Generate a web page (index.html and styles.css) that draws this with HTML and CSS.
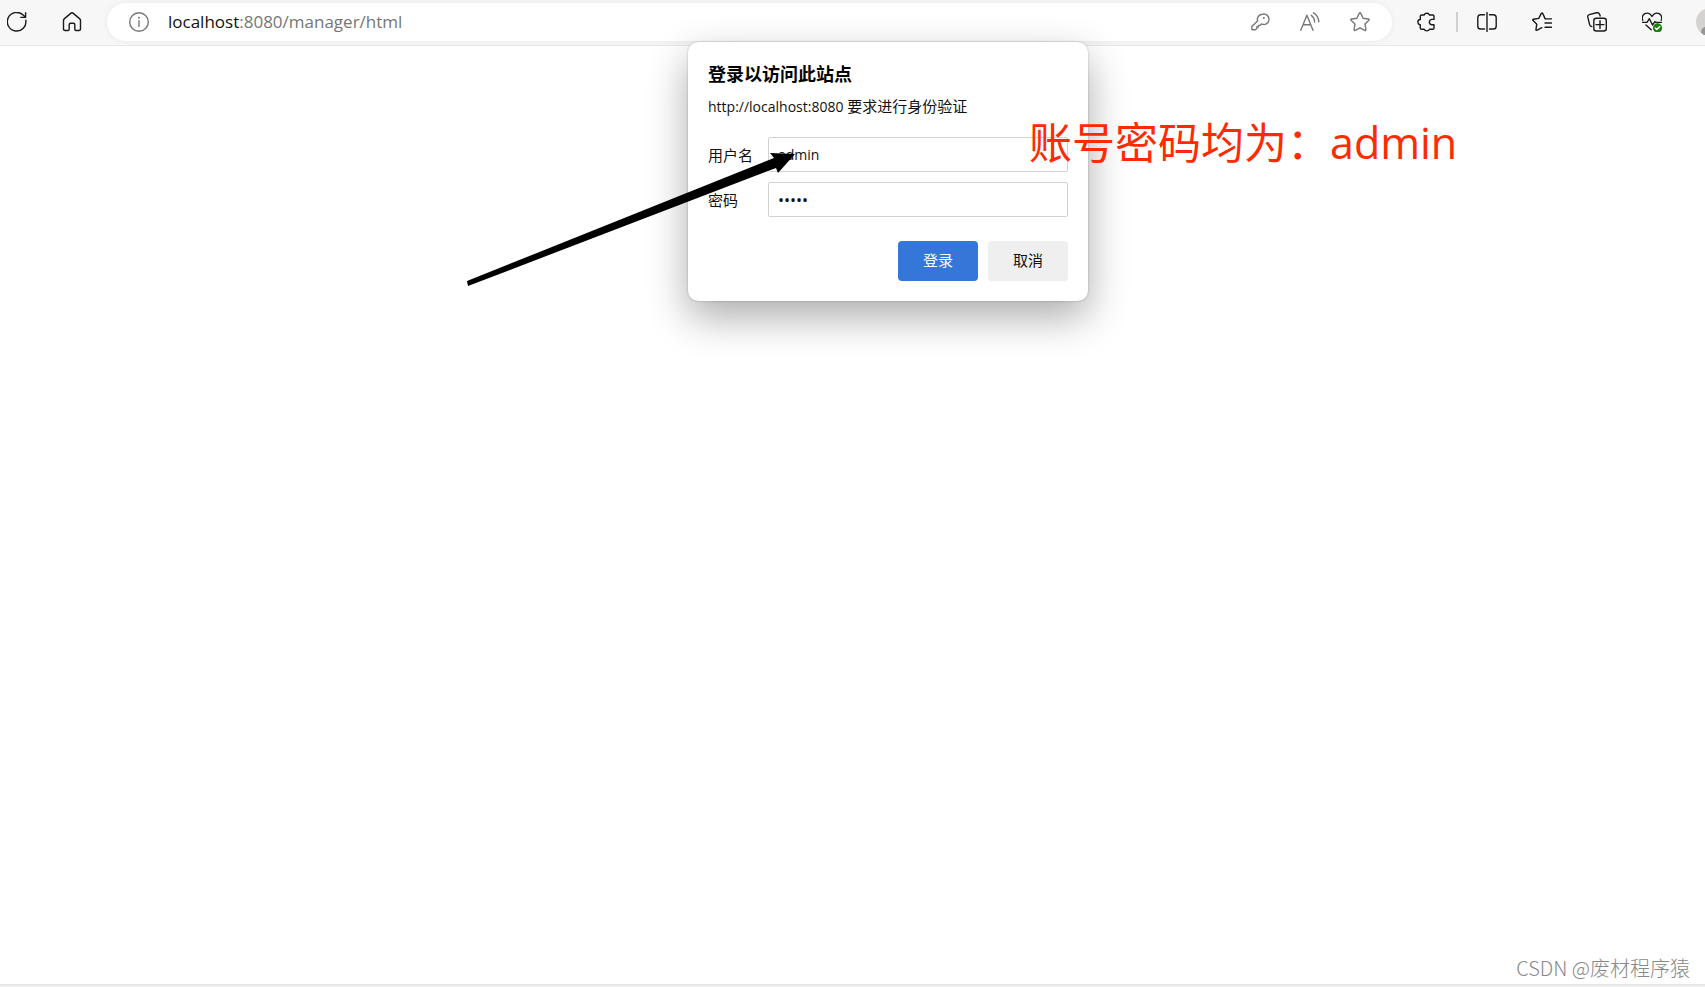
FILE: index.html
```html
<!DOCTYPE html>
<html lang="zh-CN">

<head>
    <meta charset="UTF-8">
    <meta name="viewport" content="width=device-width, initial-scale=1.0">
    <title>localhost:8080/manager/html</title>
    <link rel="stylesheet" href="styles.css">
</head>

<body>
    <header class="toolbar">
        <nav class="nav-left">
            <button class="icon-btn" aria-label="刷新">
                <svg viewBox="0 0 20 20"><path d="M18.8 8.2A9.3 9.3 0 1 1 15.8 2.8L18.6 5.2M18.6 .8V5.4H13.8"/></svg>
            </button>
            <button class="icon-btn" aria-label="主页">
                <svg viewBox="0 0 20 20"><path d="M1.5 8.4Q1.5 7.5 2.2 6.9L9 1.1Q10 .3 11 1.1L17.8 6.9Q18.5 7.5 18.5 8.4V17Q18.5 18.5 17 18.5H14Q12.8 18.5 12.8 17.3V12.5Q12.8 11.2 11.5 11.2H8.5Q7.2 11.2 7.2 12.5V17.3Q7.2 18.5 6 18.5H3Q1.5 18.5 1.5 17Z"/></svg>
            </button>
        </nav>

        <div class="address">
            <button class="icon-btn gray" aria-label="站点信息">
                <svg viewBox="0 0 20 20"><circle cx="10" cy="10" r="9.3"/><path d="M10 8.8V14.6"/><circle class="fill" cx="10" cy="5.8" r="1"/></svg>
            </button>
            <a class="url" href="http://localhost:8080/manager/html"><span>localhost</span>:8080/manager/html</a>
            <div class="address-icons">
                <button class="icon-btn gray" aria-label="密码">
                    <svg viewBox="0 0 20 20"><path d="M12.6 2.2A5.2 5.2 0 1 1 11.5 11.9L9.9 13.4H8.4V15H6.8V16.5L5.5 17.8H2.6Q1.8 17.8 1.8 17V14.6L7.6 8.9A5.2 5.2 0 0 1 12.6 2.2Z"/><circle class="fill" cx="13.8" cy="6" r="1"/></svg>
                </button>
                <button class="icon-btn gray" aria-label="大声朗读">
                    <svg viewBox="0 0 20 20"><path d="M.8 18.3L6.9 3.2L13 18.3M3.1 12.8H10.8M11.2 3.3Q14.5 5.5 14.6 10M13.4 .8Q18.6 3.8 18.8 9.8"/></svg>
                </button>
                <button class="icon-btn gray" aria-label="收藏此页">
                    <svg viewBox="0 0 20 20"><path d="M9.2 1.4Q10 0 10.8 1.4L13.1 6.2L18.4 7Q19.8 7.3 18.8 8.4L15 12.1L15.9 17.4Q16 18.9 14.7 18.3L10 15.8L5.3 18.3Q4 18.9 4.1 17.4L5 12.1L1.2 8.4Q.2 7.3 1.6 7L6.9 6.2Z"/></svg>
                </button>
            </div>
        </div>

        <nav class="nav-right">
            <button class="icon-btn" aria-label="扩展">
                <svg viewBox="0 0 20 20"><path d="M3.3 4.2Q3.3 3 4.5 3H7.2A2.7 2.3 0 0 1 12.4 3H15.8Q17 3 17 4.2V7.4H15A2.6 2.6 0 0 0 15 12.7H17V16Q17 17.2 15.8 17.2H12.4A2.7 2.3 0 0 1 7.2 17.2H4.5Q3.3 17.2 3.3 16V12.7A2.4 2.6 0 0 1 3.3 7.5Z"/></svg>
            </button>
            <span class="divider"></span>
            <button class="icon-btn" aria-label="分屏">
                <svg viewBox="0 0 20 20"><path d="M7.5 2.7H3.7Q.8 2.7 .8 5.6V14.2Q.8 17 3.7 17H7.5M12.5 2.7H16.3Q19.2 2.7 19.2 5.6V14.2Q19.2 17 16.3 17H12.5M10 .5V19.5"/></svg>
            </button>
            <button class="icon-btn" aria-label="收藏夹">
                <svg viewBox="0 0 20 20"><path d="M13.2 6.9L10.8 1.6Q10 .2 9.2 1.6L6.7 6.4L1.6 7.2Q.1 7.5 1.1 8.6L4.8 12.2L4 17.3Q3.8 18.9 5.2 18.2L9.8 15.7M13.2 6.9H19.6M13 11H19.6M13 15.2H19.6"/></svg>
            </button>
            <button class="icon-btn" aria-label="集锦">
                <svg viewBox="0 0 20 20"><path d="M4.8 14.5Q3.1 14.3 2.6 12.6L.8 5.2Q.4 3.2 2.2 2.6L9.5 .8Q11.8 .3 12.6 2.2L13.2 4M9.4 6.2H16.8Q19.3 6.2 19.3 8.7V16.5Q19.3 19 16.8 19H9.4Q6.8 19 6.8 16.5V8.7Q6.8 6.2 9.4 6.2ZM13 8.6V16.6M9 12.6H17"/></svg>
            </button>
            <button class="icon-btn" aria-label="浏览器概要">
                <svg viewBox="0 0 20 20"><path d="M.8 8.2A4.8 4.8 0 0 1 9.4 3.7L10 4.4L10.6 3.7A4.8 4.8 0 0 1 19.2 8.2M.3 10.4H5L7.4 6.7L10.5 13L12.9 9.7L14 10.4H19.7M4 13L9.2 17.8"/><circle class="badge" cx="15.5" cy="15.9" r="4.6"/><path class="tick" d="M13.2 16L14.8 17.6L17.8 14.4"/></svg>
            </button>
            <button class="avatar" aria-label="个人资料">
                <svg viewBox="0 0 28 28"><circle cx="14" cy="14" r="14" fill="#d5d3d1"/><circle cx="14" cy="11" r="5" fill="#989694"/><path d="M5 24.7Q5 18 14 18Q23 18 23 24.7A14 14 0 0 1 5 24.7Z" fill="#989694"/></svg>
            </button>
        </nav>
    </header>

    <main class="page">
        <form class="dialog">
            <h1>登录以访问此站点</h1>
            <p><span class="host">http://localhost:8080</span> 要求进行身份验证</p>
            <div class="row">
                <label for="user">用户名</label>
                <input type="text" id="user" value="admin">
            </div>
            <div class="row">
                <label for="pass">密码</label>
                <input type="password" id="pass" value="admin">
            </div>
            <div class="buttons">
                <button type="button" class="login">登录</button>
                <button type="button" class="cancel">取消</button>
            </div>
        </form>

        <svg class="arrow" viewBox="0 0 330 134"><path d="M0 128L307 5L303 0L328 1L311 20L309 15L1 133Z"/></svg>
        <div class="note">账号密码均为：admin</div>
        <div class="watermark">CSDN @废材程序猿</div>
    </main>
    <footer class="bottom"></footer>
</body>

</html>
```

FILE: styles.css
```css
* {
    box-sizing: border-box;
}

body {
    font-family: "Open Sans", "Noto Sans CJK SC", sans-serif;
    background-color: #fff;
    margin: 0;
    min-height: 100vh;
    display: flex;
    flex-direction: column;
    position: relative;
    overflow: hidden;
}

button,
input {
    font-family: inherit;
    border: none;
    padding: 0;
}

.toolbar {
    display: flex;
    align-items: center;
    height: 46px;
    padding: 0 0 2px 2px;
    background-color: #f7f7f7;
    border-bottom: 1px solid #e8e8e8;
    overflow: hidden;
}

.nav-left,
.nav-right {
    display: flex;
    align-items: center;
    gap: 25px;
}

.icon-btn {
    display: flex;
    justify-content: center;
    align-items: center;
    flex: none;
    width: 30px;
    height: 30px;
    background: none;
    color: #1b1b1b;
}

.icon-btn svg {
    width: 20px;
    height: 20px;
    fill: none;
    stroke: currentColor;
    stroke-width: 1.4;
    stroke-linecap: round;
    stroke-linejoin: round;
}

.icon-btn .fill {
    fill: currentColor;
    stroke: none;
}

.icon-btn .badge {
    fill: #1b7f0c;
    stroke: none;
}

.icon-btn .tick {
    stroke: #fff;
}

.gray {
    color: #777;
}

.address {
    display: flex;
    align-items: center;
    flex: 1;
    height: 38px;
    margin: 0 20px;
    padding: 0 17px;
    background-color: #fff;
    border-radius: 19px;
    box-shadow: 0 0 6px rgba(0, 0, 0, 0.06);
}

.url {
    flex: 1;
    margin-left: 14px;
    font-size: 17px;
    line-height: 24px;
    color: #767676;
    text-decoration: none;
}

.url span {
    color: #111;
}

.address-icons {
    display: flex;
    gap: 20px;
}

.divider {
    width: 2px;
    height: 20px;
    margin: 0 -11px;
    background-color: #d0d0d0;
}

.avatar {
    flex: none;
    width: 28px;
    height: 28px;
    margin: 0 -19px 0 4px;
    background: none;
}

.avatar svg {
    display: block;
}

.page {
    flex: 1;
}

.dialog {
    position: absolute;
    top: 42px;
    left: 688px;
    width: 400px;
    padding: 20px;
    background-color: #fff;
    border-radius: 10px;
    box-shadow: 0 0 2px rgba(0, 0, 0, 0.3), 0 16px 40px rgba(0, 0, 0, 0.33);
    font-size: 15px;
    color: #111;
}

.dialog h1 {
    margin: 0 0 10px;
    font-size: 18px;
    line-height: 24px;
    color: #000;
}

.dialog p {
    margin: 0 0 20px;
    line-height: 20px;
}

.host {
    font-size: 14px;
}

.row {
    display: flex;
    align-items: center;
    margin-bottom: 10px;
}

.row label {
    width: 60px;
    line-height: 20px;
}

.row input {
    flex: 1;
    height: 35px;
    padding: 0 9px;
    border: 1px solid #d2d2d2;
    border-radius: 2px;
    font-size: 14px;
    color: #111;
}

.row input[type="password"] {
    font-size: 16px;
}

.buttons {
    display: flex;
    justify-content: flex-end;
    gap: 10px;
    margin-top: 24px;
}

.buttons button {
    width: 80px;
    height: 40px;
    padding-bottom: 3px;
    border-radius: 4px;
    font-size: 15px;
}

.login {
    background-color: #3576d9;
    color: #fff;
}

.cancel {
    background-color: #efefef;
    color: #111;
}

.arrow {
    position: absolute;
    top: 153px;
    left: 467px;
    width: 330px;
    height: 134px;
}

.note {
    position: absolute;
    top: 113px;
    left: 1029px;
    font-size: 43px;
    line-height: 60px;
    color: #ff2a00;
    white-space: nowrap;
}

.watermark {
    position: absolute;
    right: 15px;
    bottom: 7px;
    font-family: "Noto Sans CJK SC", sans-serif;
    font-size: 20px;
    font-weight: 300;
    line-height: 24px;
    color: #888;
}

.bottom {
    height: 3px;
    background-color: #f5f5f5;
    border-top: 2px solid #e6e6e6;
}
```
